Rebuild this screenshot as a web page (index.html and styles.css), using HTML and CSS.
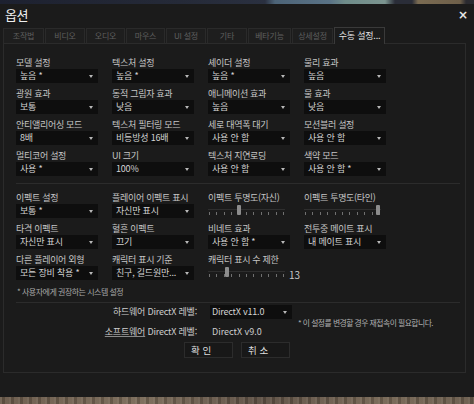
FILE: index.html
```html
<!DOCTYPE html>
<html lang="ko">
<head>
<meta charset="utf-8">
<title>옵션</title>
<link rel="stylesheet" href="styles.css">
</head>
<body>
<div class="strip-top"></div>
<div class="window">
  <div class="titlebar">
    <span class="title">옵션</span>
    <span class="close">×</span>
  </div>
  <div class="tabs">
    <div class="tab w41">조작법</div>
    <div class="tab w40">비디오</div>
    <div class="tab w39">오디오</div>
    <div class="tab w39">마우스</div>
    <div class="tab w40">UI 설정</div>
    <div class="tab w40">기타</div>
    <div class="tab w43">베타기능</div>
    <div class="tab w41">상세설정</div>
    <div class="tab active">수동 설정...</div>
  </div>
  <div class="panel">
    <div class="grid">
      <div class="cell"><div class="label">모델 설정</div><div class="dd">높음 *</div></div>
      <div class="cell"><div class="label">텍스처 설정</div><div class="dd">높음 *</div></div>
      <div class="cell"><div class="label">셰이더 설정</div><div class="dd">높음 *</div></div>
      <div class="cell"><div class="label">물리 효과</div><div class="dd">높음</div></div>

      <div class="cell"><div class="label">광원 효과</div><div class="dd">보통</div></div>
      <div class="cell"><div class="label">동적 그림자 효과</div><div class="dd">낮음</div></div>
      <div class="cell"><div class="label">애니메이션 효과</div><div class="dd">높음</div></div>
      <div class="cell"><div class="label">물 효과</div><div class="dd">낮음</div></div>

      <div class="cell"><div class="label">안티앨리어싱 모드</div><div class="dd">8배</div></div>
      <div class="cell"><div class="label">텍스처 필터링 모드</div><div class="dd">비등방성 16배</div></div>
      <div class="cell"><div class="label">세로 대역폭 대기</div><div class="dd">사용 안 함</div></div>
      <div class="cell"><div class="label">모션블러 설정</div><div class="dd">사용 안 함</div></div>

      <div class="cell"><div class="label">멀티코어 설정</div><div class="dd">사용 *</div></div>
      <div class="cell"><div class="label">UI 크기</div><div class="dd">100%</div></div>
      <div class="cell"><div class="label">텍스처 지연로딩</div><div class="dd">사용 안 함</div></div>
      <div class="cell"><div class="label">색약 모드</div><div class="dd">사용 안 함 *</div></div>
    </div>

    <div class="divider d1"></div>

    <div class="grid g2">
      <div class="cell"><div class="label">이펙트 설정</div><div class="dd">보통 *</div></div>
      <div class="cell"><div class="label">플레이어 이펙트 표시</div><div class="dd">자신만 표시</div></div>
      <div class="cell"><div class="label">이펙트 투명도(자신)</div>
        <div class="slider"><div class="track"></div><div class="ticks"><i></i><i></i><i></i><i></i><i></i><i></i><i></i><i></i><i></i><i></i><i></i></div><div class="thumb" style="left:29px"></div></div>
      </div>
      <div class="cell"><div class="label">이펙트 투명도(타인)</div>
        <div class="slider"><div class="track"></div><div class="ticks"><i></i><i></i><i></i><i></i><i></i><i></i><i></i><i></i><i></i><i></i><i></i></div><div class="thumb" style="left:72px"></div></div>
      </div>

      <div class="cell"><div class="label">타격 이펙트</div><div class="dd">자신만 표시</div></div>
      <div class="cell"><div class="label">혈흔 이펙트</div><div class="dd">끄기</div></div>
      <div class="cell"><div class="label">비네트 효과</div><div class="dd">사용 안 함 *</div></div>
      <div class="cell"><div class="label">전투중 메이트 표시</div><div class="dd">내 메이트 표시</div></div>

      <div class="cell"><div class="label">다른 플레이어 외형</div><div class="dd">모든 장비 착용 *</div></div>
      <div class="cell"><div class="label">캐릭터 표시 기준</div><div class="dd">친구, 길드원만...</div></div>
      <div class="cell wide"><div class="label">캐릭터 표시 수 제한</div>
        <div class="slider-row">
          <div class="slider"><div class="track"></div><div class="ticks"><i></i><i></i><i></i><i></i><i></i><i></i><i></i><i></i><i></i><i></i><i></i></div><div class="thumb" style="left:17px"></div></div>
          <span class="value">13</span>
        </div>
      </div>
    </div>

    <div class="note">* 사용자에게 권장하는 시스템 설정</div>

    <div class="divider d2"></div>

    <div class="dx">
      <div class="dx-label">하드웨어 DirectX 레벨:</div>
      <div class="dd dx-dd">DirectX v11.0</div>
      <div class="dx-note">* 이 설정를 변경할 경우 재접속이 필요합니다.</div>
      <div class="dx-label"><span class="ul">소프트웨어</span> DirectX 레벨:</div>
      <div class="dx-val">DirectX v9.0</div>
    </div>

    <div class="buttons">
      <div class="btn">확 인</div>
      <div class="btn">취 소</div>
    </div>
  </div>
</div>
<div class="strip-bottom"></div>
</body>
</html>
```

FILE: styles.css
```css
* { box-sizing: border-box; }
html, body { margin: 0; padding: 0; }
body {
  width: 474px;
  height: 404px;
  overflow: hidden;
  background: #1b1b1b;
  font-family: "Noto Sans CJK KR", "Noto Sans", sans-serif;
  color: #c9c9c9;
  font-size: 9px;
}
.strip-top {
  height: 4px;
  background: linear-gradient(90deg, #1d2130 0px, #252a38 180px, #2a3040 265px, #4d6478 275px, #5a7386 330px, #6f8c8a 345px, #7c9590 385px, #2a2d38 395px, #2a2d38 412px, #7a6b52 418px, #6f604a 460px, #2a2a30 466px);
}
.strip-bottom {
  height: 7px;
  background:
    repeating-linear-gradient(90deg, rgba(255,255,255,0.08) 0 2px, rgba(0,0,0,0.15) 2px 5px, rgba(255,255,255,0.04) 5px 9px),
    linear-gradient(90deg, #6a5a4a, #7a6a58 30%, #5e5044 55%, #766654 80%, #6a5c4c);
}
.window {
  height: 393px;
  background: #1b1b1b;
}
.titlebar {
  height: 22px;
  display: flex;
  align-items: center;
  justify-content: space-between;
  padding: 0 6px 0 5px;
}
.title {
  font-size: 13px;
  color: #f0f0f0;
  letter-spacing: -0.5px;
  line-height: 16px;
}
.close {
  font-size: 12px;
  color: #e6e6e6;
  font-family: "DejaVu Sans", sans-serif;
  font-weight: bold;
  line-height: 12px;
}
.tabs {
  height: 17px;
  display: flex;
  align-items: flex-end;
  padding-left: 3px;
  gap: 1px;
}
.tab {
  height: 15px;
  border: 1px solid #2a2a2a;
  border-bottom: none;
  background: #1e1e1e;
  color: #5e5e5e;
  font-size: 8px;
  line-height: 14px;
  text-align: center;
  white-space: nowrap;
  letter-spacing: -0.2px;
}
.w39 { width: 39px; }
.w40 { width: 40px; }
.w41 { width: 41px; }
.w43 { width: 43px; }
.tab.active {
  width: 51px;
  height: 17px;
  background: #1b1b1b;
  border-color: #3a3a3a;
  color: #e2e2e2;
  font-size: 9px;
  line-height: 16px;
  position: relative;
  top: 1px;
}
.panel {
  margin-left: 3px;
  width: 463px;
  height: 330px;
  border: 1px solid #2b2b2b;
  padding: 13px 0 0 12px;
}
.grid {
  display: grid;
  grid-template-columns: repeat(4, 82px);
  column-gap: 14px;
  row-gap: 5px;
}
.label {
  height: 12px;
  line-height: 12px;
  color: #c6c6c6;
  white-space: nowrap;
  letter-spacing: -0.3px;
}
.dd {
  height: 14px;
  width: 82px;
  background: #0e0e0e;
  color: #d2d2d2;
  line-height: 14px;
  padding-left: 4px;
  position: relative;
  white-space: nowrap;
  letter-spacing: -0.2px;
}
.dd::after {
  content: "";
  position: absolute;
  right: 5px;
  top: 6px;
  border-left: 2.5px solid transparent;
  border-right: 2.5px solid transparent;
  border-top: 3px solid #b8b8b8;
}
.divider {
  width: 444px;
  height: 1px;
  background: #2c2c2c;
}
.d1 { margin-top: 7px; margin-bottom: 8px; }
.d2 { margin-top: 4px; }
.slider {
  position: relative;
  width: 77px;
  height: 14px;
}
.track {
  position: absolute;
  left: 0;
  right: 0;
  top: 5px;
  height: 1px;
  background: #2e2e2e;
}
.ticks {
  position: absolute;
  left: 1px;
  right: 1px;
  top: 8px;
  height: 3px;
  display: flex;
  justify-content: space-between;
}
.ticks i {
  display: block;
  width: 1px;
  height: 3px;
  background: #707070;
}
.thumb {
  position: absolute;
  top: 1px;
  width: 4px;
  height: 10px;
  background: #8c8c8c;
  border-radius: 1px;
}
.slider-row {
  display: flex;
  align-items: center;
  gap: 4px;
}
.value {
  font-size: 10px;
  color: #c8c8c8;
  line-height: 14px;
  position: relative;
  top: 2px;
}
.wide { grid-column: span 2; }
.note {
  margin-top: 6px;
  height: 12px;
  line-height: 12px;
  color: #a8a8a8;
  font-size: 8px;
  padding-left: 1px;
  letter-spacing: -0.5px;
}
.dx {
  margin-top: 2px;
  display: grid;
  grid-template-columns: 181px 82px auto;
  grid-template-rows: 14px 14px;
  column-gap: 13px;
  row-gap: 6px;
  align-items: center;
}
.dx-label {
  text-align: right;
  color: #cdcdcd;
  line-height: 14px;
  white-space: nowrap;
  letter-spacing: -0.2px;
}
.ul { text-decoration: underline; text-decoration-color: #8a8a8a; }
.dx-dd { padding-left: 2px; }
.dx-val { color: #cdcdcd; line-height: 14px; padding-left: 2px; }
.dx-note {
  grid-column: 3;
  grid-row: 1 / span 2;
  align-self: center;
  margin-left: -7px;
  font-size: 7.8px;
  color: #b0b0b0;
  white-space: nowrap;
  letter-spacing: -0.5px;
}
.buttons {
  margin-top: 3px;
  padding-left: 168px;
  display: flex;
  gap: 8px;
}
.btn {
  width: 49px;
  height: 16px;
  border: 1px solid #2c2c2c;
  background: #181818;
  color: #dcdcdc;
  line-height: 14px;
  padding-left: 6px;
  font-size: 9.5px;
}
```
